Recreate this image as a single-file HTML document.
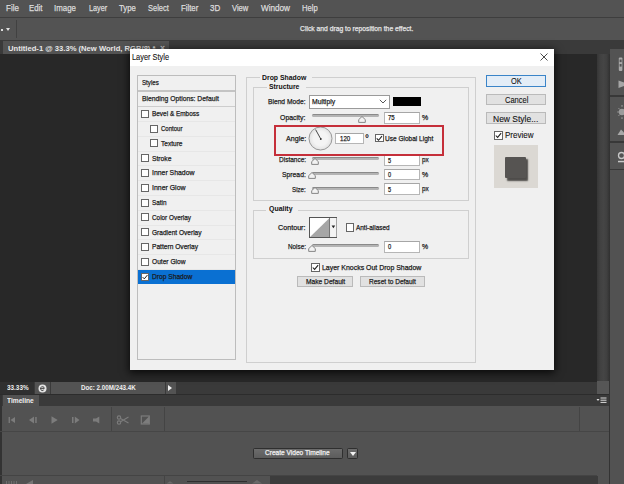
<!DOCTYPE html>
<html>
<head>
<meta charset="utf-8">
<title>Layer Style</title>
<style>
*{box-sizing:border-box;margin:0;padding:0}
html,body{width:624px;height:484px;overflow:hidden;background:#282828;font-family:"Liberation Sans","DejaVu Sans",sans-serif;}
.a{position:absolute}
.t{position:absolute;white-space:nowrap;line-height:1;transform-origin:0 50%;-webkit-text-stroke:0.25px}
.cb{position:absolute;border:1px solid #666;background:#fff}
.grp{position:absolute;border:1px solid #cfcfcf}
.inp{position:absolute;background:#fff;border:1px solid #b6b6b6;border-top-color:#a6a6a6}
.btn{position:absolute;background:#e1e1e1;border:1px solid #bababa}
.sl{position:absolute;height:3px;background:#b4b4b4;border-top:1px solid #8a8a8a;border-radius:1.5px}
.row{position:absolute;left:0;width:97px}
</style>
</head>
<body>
<div class="a" style="left:0px;top:0px;width:624px;height:17px;background:#535353"></div>
<div class="a" style="left:0px;top:17px;width:624px;height:1px;background:#3e3e3e"></div>
<div class="a" style="left:0px;top:18px;width:624px;height:22px;background:#535353"></div>
<div class="a" style="left:0px;top:40px;width:624px;height:14px;background:#3a3a3a"></div>
<div class="a" style="left:0px;top:41px;width:169px;height:13px;background:#535353"></div>
<div class="a" style="left:0px;top:40px;width:2.5px;height:14px;background:#3a3a3a"></div>
<div class="a" style="left:0px;top:54px;width:597px;height:328px;background:#282828"></div>
<div class="a" style="left:597px;top:54px;width:12.7px;height:340px;background:linear-gradient(90deg,#363636 0%,#414141 25%,#454545 50%,#404040 75%,#303030 100%)"></div>
<div class="a" style="left:608px;top:394px;width:1.7px;height:90px;background:#333"></div>
<div class="a" style="left:609.7px;top:40px;width:14.3px;height:444px;background:#525252"></div>
<div class="a" style="left:609.7px;top:40px;width:14.3px;height:9.4px;background:#3a3a3a"></div>
<div class="a" style="left:609.7px;top:49.4px;width:14.3px;height:120px;background:#535353"></div>
<div class="a" style="left:609.7px;top:95px;width:14.3px;height:2px;background:#383838"></div>
<div class="a" style="left:609.7px;top:140.5px;width:14.3px;height:2px;background:#383838"></div>
<div class="a" style="left:609.7px;top:169px;width:14.3px;height:1.2px;background:#383838"></div>
<svg class="a" style="left:611px;top:49px" width="13" height="120" viewBox="0 0 13 120"><rect x="7.8" y="8.5" width="3.6" height="13.5" rx="1" fill="#a9a9a9"/><rect x="8.6" y="10.5" width="2" height="2.6" fill="#555"/><rect x="8.6" y="15" width="2" height="2.6" fill="#555"/><path d="M7.5 31.5 L13 33.5 L13 37 L7.5 39 Z" fill="#a6a6a6"/><circle cx="11" cy="63" r="3.2" fill="#9c9c9c"/><path d="M6.3 63 h1.6 M11 56 v1.8 M11 68.2 v1.8 M7.6 59.2 l1.1 1.1 M7.6 66.8 l1.1 -1.1" stroke="#a8a8a8" stroke-width="0.9"/><path d="M6.5 86 L10 80.5 L13 83.5 L13 86 Z" fill="#a8a8a8"/><circle cx="10.5" cy="106.5" r="3" fill="none" stroke="#c8c8c8" stroke-width="1.3"/><rect x="7" y="111.8" width="6" height="1.5" fill="#c8c8c8"/></svg>
<span class="t" style="left:5.6px;top:3.06px;font-size:9.6px;color:#dddddd;transform:scaleX(0.8339);">File</span>
<span class="t" style="left:29.3px;top:3.06px;font-size:9.6px;color:#dddddd;transform:scaleX(0.8038);">Edit</span>
<span class="t" style="left:54.4px;top:3.06px;font-size:9.6px;color:#dddddd;transform:scaleX(0.8211);">Image</span>
<span class="t" style="left:88.6px;top:3.06px;font-size:9.6px;color:#dddddd;transform:scaleX(0.7583);">Layer</span>
<span class="t" style="left:118.8px;top:3.06px;font-size:9.6px;color:#dddddd;transform:scaleX(0.8072);">Type</span>
<span class="t" style="left:148px;top:3.06px;font-size:9.6px;color:#dddddd;transform:scaleX(0.7798);">Select</span>
<span class="t" style="left:181.2px;top:3.06px;font-size:9.6px;color:#dddddd;transform:scaleX(0.8111);">Filter</span>
<span class="t" style="left:210px;top:3.06px;font-size:9.6px;color:#dddddd;transform:scaleX(0.8316);">3D</span>
<span class="t" style="left:231.7px;top:3.06px;font-size:9.6px;color:#dddddd;transform:scaleX(0.7903);">View</span>
<span class="t" style="left:261px;top:3.06px;font-size:9.6px;color:#dddddd;transform:scaleX(0.8498);">Window</span>
<span class="t" style="left:302px;top:3.06px;font-size:9.6px;color:#dddddd;transform:scaleX(0.7956);">Help</span>
<div class="a" style="left:16px;top:20px;width:1px;height:18px;background:#414141"></div>
<div class="a" style="left:6px;top:28px;width:0;height:0;border-left:2.5px solid transparent;border-right:2.5px solid transparent;border-top:3px solid #e0e0e0"></div>
<div class="a" style="left:1px;top:29px;width:1.5px;height:1.5px;background:#ddd"></div>
<span class="t" style="left:299.7px;top:24.63px;font-size:7.6px;color:#e6e6e6;transform:scaleX(0.8897);">Click and drag to reposition the effect.</span>
<span class="t" style="left:8px;top:45.02px;font-size:8px;color:#e8e8e8;font-weight:bold;-webkit-text-stroke:0;transform:scaleX(0.9529);">Untitled-1 @ 33.3% (New World, RGB/8) *</span>
<span class="t" style="left:160px;top:44.35px;font-size:8.5px;color:#d0d0d0;transform:scaleX(1.0063);">×</span>
<div class="a" style="left:0px;top:382px;width:597px;height:12px;background:#3a3a3a"></div>
<div class="a" style="left:0px;top:382px;width:34px;height:12px;background:#303030"></div>
<div class="a" style="left:34.5px;top:382px;width:15px;height:12px;background:#535353"></div>
<div class="a" style="left:50.5px;top:382px;width:114px;height:12px;background:#535353"></div>
<div class="a" style="left:165.5px;top:382px;width:10px;height:12px;background:#535353"></div>
<div class="a" style="left:597px;top:381px;width:12px;height:13px;background:#565656"></div>
<span class="t" style="left:7.2px;top:383.93px;font-size:7.6px;color:#efefef;font-weight:bold;-webkit-text-stroke:0;transform:scaleX(0.8383);">33.33%</span>
<span class="t" style="left:80.8px;top:383.93px;font-size:7.6px;color:#efefef;font-weight:bold;-webkit-text-stroke:0;transform:scaleX(0.8217);">Doc: 2.00M/243.4K</span>
<svg class="a" style="left:38px;top:383.5px" width="9" height="9" viewBox="0 0 9 9"><circle cx="4.5" cy="4.5" r="4" fill="#e4e4e4"/><path d="M2.6 4.6 h3.6 M6.3 4.5 a1.9 1.9 0 1 0 -0.6 1.5" stroke="#4a4a4a" stroke-width="1" fill="none"/></svg>
<div class="a" style="left:168.3px;top:385px;width:0;height:0;border-top:3px solid transparent;border-bottom:3px solid transparent;border-left:4.5px solid #f0f0f0"></div>
<div class="a" style="left:0px;top:394px;width:609px;height:1px;background:#2c2c2c"></div>
<div class="a" style="left:0px;top:395px;width:609px;height:11px;background:#3a3a3a"></div>
<div class="a" style="left:3px;top:395px;width:36px;height:11px;background:#535353"></div>
<div class="a" style="left:0px;top:406px;width:609px;height:78px;background:#525252"></div>
<div class="a" style="left:0px;top:395px;width:2px;height:89px;background:#333"></div>
<span class="t" style="left:7.2px;top:396.93px;font-size:7.6px;color:#f0f0f0;font-weight:bold;-webkit-text-stroke:0;transform:scaleX(0.8738);">Timeline</span>
<div class="a" style="left:0px;top:431px;width:609px;height:1px;background:#464646"></div>
<div class="a" style="left:111px;top:407px;width:1px;height:24px;background:#444"></div>
<div class="a" style="left:163.5px;top:407px;width:1px;height:24px;background:#444"></div>
<div class="a" style="left:579px;top:407px;width:1px;height:24px;background:#444"></div>
<div class="a" style="left:0px;top:475px;width:597px;height:1px;background:#444"></div>
<div class="a" style="left:270px;top:476px;width:328px;height:8px;background:#3c3c3c"></div>
<div class="a" style="left:163.5px;top:476px;width:1px;height:8px;background:#444"></div>
<div class="a" style="left:187px;top:480.5px;width:60px;height:1.5px;background:#2e2e2e"></div>
<svg class="a" style="left:596px;top:396px" width="11" height="9" viewBox="0 0 11 9"><path d="M0.5 3 h3 l-1.5 2 z" fill="#ddd"/><path d="M4.5 2 h6 M4.5 4.2 h6 M4.5 6.4 h6" stroke="#ddd" stroke-width="1"/></svg>
<svg class="a" style="left:0px;top:412px" width="160" height="16" viewBox="0 0 160 16"><g fill="#7c7c7c"><rect x="8.6" y="5" width="1.3" height="6"/><path d="M15 5 L15 11 L10.5 8 Z"/><path d="M34 4.6 L34 11.4 L29 8 Z"/><rect x="35.2" y="5" width="1.5" height="6"/><path d="M51.5 4.3 L51.5 11.7 L57.7 8 Z"/><rect x="72" y="5" width="1.5" height="6"/><path d="M74.8 4.6 L74.8 11.4 L79.5 8 Z"/><path d="M99.3 4.5 L99.3 11.5 L96 9.5 L93 9.5 L93 6.5 L96 6.5 Z"/></g><g fill="none" stroke="#7c7c7c" stroke-width="1.1"><circle cx="119" cy="5.6" r="1.7"/><circle cx="119" cy="10.6" r="1.7"/><path d="M120.5 6.5 L128.5 11 M120.5 9.7 L128.5 5"/></g><rect x="141.3" y="4" width="8" height="8" fill="none" stroke="#7c7c7c" stroke-width="1.2"/><path d="M149 4.5 L149 11.5 L142 11.5 Z" fill="#7c7c7c"/></svg>
<svg class="a" style="left:5px;top:478px" width="32" height="6" viewBox="0 0 32 6"><path d="M1.5 3 v3 M4 3 v3 M6.5 3 v3 M9 3 v3 M11.5 3 v3" stroke="#6e6e6e" stroke-width="1"/><path d="M21 6 L28 2 L28 6 Z" fill="#757575"/></svg>
<svg class="a" style="left:165px;top:478px" width="100" height="6" viewBox="0 0 100 6"><path d="M1.5 5.5 L5 3.2 L8.5 5.5 Z" fill="#6a6a6a"/><path d="M87 5.5 L92 2 L97 5.5 Z" fill="#6a6a6a"/></svg>
<div class="a" style="left:252.5px;top:447.5px;width:90px;height:11.5px;background:linear-gradient(#6c6c6c,#5c5c5c);border:1px solid #2f2f2f;border-radius:1.5px"></div>
<span class="t" style="left:265.4px;top:449.24px;font-size:7.4px;color:#f2f2f2;transform:scaleX(0.8901);">Create Video Timeline</span>
<div class="a" style="left:347px;top:447.5px;width:11px;height:11.5px;background:linear-gradient(#6c6c6c,#5c5c5c);border:1px solid #2f2f2f;border-radius:1.5px"></div>
<div class="a" style="left:349.5px;top:451.5px;width:0;height:0;border-left:3px solid transparent;border-right:3px solid transparent;border-top:4px solid #f4f4f4"></div>
<div class="a" style="left:130px;top:48.6px;width:424px;height:321.2px;background:#f0f0f0;box-shadow:0 2px 8px 1px rgba(0,0,0,0.75)"><div class="a" style="left:0px;top:0px;width:424px;height:17.4px;background:#fff"></div><span class="t" style="left:2.2px;top:4.48px;font-size:9.2px;color:#111;transform:scaleX(0.8049);-webkit-text-stroke:0.1px;">Layer Style</span><svg class="a" style="left:409.5px;top:4.7px" width="8" height="8" viewBox="0 0 8 8"><path d="M0.5 0.5 L7.5 7.5 M7.5 0.5 L0.5 7.5" stroke="#2a2a2a" stroke-width="0.85"/></svg><div class="a" style="left:7px;top:26.9px;width:99px;height:285px;border:1px solid #bdbdbd;background:#f0f0f0"></div><div class="a" style="left:8px;top:41.4px;width:97px;height:1.6px;background:#c4c4c4"></div><div class="a" style="left:8px;top:57.4px;width:97px;height:1px;background:#cdcdcd"></div><span class="t" style="left:12px;top:30.23px;font-size:7.8px;color:#1a1a1a;transform:scaleX(0.7912);">Styles</span><span class="t" style="left:12px;top:46.43px;font-size:7.8px;color:#1a1a1a;transform:scaleX(0.8686);">Blending Options: Default</span><div class="a" style="left:8px;top:72.4px;width:97px;height:1px;background:#e7e7e7"></div><div class="cb" style="left:11px;top:61.4px;width:8px;height:8px;"></div><span class="t" style="left:22px;top:61.63px;font-size:7.8px;color:#1a1a1a;transform:scaleX(0.8251);">Bevel &amp; Emboss</span><div class="a" style="left:8px;top:87.4px;width:97px;height:1px;background:#e7e7e7"></div><div class="cb" style="left:20px;top:76.4px;width:8px;height:8px;"></div><span class="t" style="left:30.8px;top:76.43px;font-size:7.8px;color:#1a1a1a;transform:scaleX(0.7748);">Contour</span><div class="a" style="left:8px;top:102.4px;width:97px;height:1px;background:#e7e7e7"></div><div class="cb" style="left:20px;top:90.4px;width:8px;height:8px;"></div><span class="t" style="left:30.8px;top:91.23px;font-size:7.8px;color:#1a1a1a;transform:scaleX(0.8406);">Texture</span><div class="a" style="left:8px;top:116.4px;width:97px;height:1px;background:#e7e7e7"></div><div class="cb" style="left:11px;top:105.4px;width:8px;height:8px;"></div><span class="t" style="left:22px;top:106.03px;font-size:7.8px;color:#1a1a1a;transform:scaleX(0.8649);">Stroke</span><div class="a" style="left:8px;top:131.4px;width:97px;height:1px;background:#e7e7e7"></div><div class="cb" style="left:11px;top:120.4px;width:8px;height:8px;"></div><span class="t" style="left:22px;top:120.83px;font-size:7.8px;color:#1a1a1a;transform:scaleX(0.8831);">Inner Shadow</span><div class="a" style="left:8px;top:146.4px;width:97px;height:1px;background:#e7e7e7"></div><div class="cb" style="left:11px;top:135.4px;width:8px;height:8px;"></div><span class="t" style="left:22px;top:135.63px;font-size:7.8px;color:#1a1a1a;transform:scaleX(0.8885);">Inner Glow</span><div class="a" style="left:8px;top:161.4px;width:97px;height:1px;background:#e7e7e7"></div><div class="cb" style="left:11px;top:150.4px;width:8px;height:8px;"></div><span class="t" style="left:22px;top:150.43px;font-size:7.8px;color:#1a1a1a;transform:scaleX(0.8155);">Satin</span><div class="a" style="left:8px;top:176.4px;width:97px;height:1px;background:#e7e7e7"></div><div class="cb" style="left:11px;top:164.4px;width:8px;height:8px;"></div><span class="t" style="left:22px;top:165.23px;font-size:7.8px;color:#1a1a1a;transform:scaleX(0.8181);">Color Overlay</span><div class="a" style="left:8px;top:190.4px;width:97px;height:1px;background:#e7e7e7"></div><div class="cb" style="left:11px;top:179.4px;width:8px;height:8px;"></div><span class="t" style="left:22px;top:180.03px;font-size:7.8px;color:#1a1a1a;transform:scaleX(0.8399);">Gradient Overlay</span><div class="a" style="left:8px;top:205.4px;width:97px;height:1px;background:#e7e7e7"></div><div class="cb" style="left:11px;top:194.4px;width:8px;height:8px;"></div><span class="t" style="left:22px;top:194.83px;font-size:7.8px;color:#1a1a1a;transform:scaleX(0.8491);">Pattern Overlay</span><div class="a" style="left:8px;top:220.4px;width:97px;height:1px;background:#e7e7e7"></div><div class="cb" style="left:11px;top:209.4px;width:8px;height:8px;"></div><span class="t" style="left:22px;top:209.63px;font-size:7.8px;color:#1a1a1a;transform:scaleX(0.8494);">Outer Glow</span><div class="a" style="left:8px;top:221.4px;width:97px;height:14.5px;background:#0a70d2"></div><div class="cb" style="left:11px;top:224.4px;width:8px;height:8px;"></div><svg class="a" style="left:11px;top:224.4px" width="8" height="8" viewBox="0 0 9 9"><path d="M1.8 4.6 L3.7 6.6 L7.3 2.2" fill="none" stroke="#222" stroke-width="1.1"/></svg><span class="t" style="left:22px;top:224.43px;font-size:7.8px;color:#1a1a1a;transform:scaleX(0.8529);">Drop Shadow</span><div class="grp" style="left:116px;top:28.4px;width:229.5px;height:285.8px;"></div><div class="a" style="left:130px;top:27.4px;width:52px;height:4px;background:#f0f0f0"></div><span class="t" style="left:132px;top:25.07px;font-size:7.9px;color:#111;font-weight:bold;-webkit-text-stroke:0;transform:scaleX(0.8710);">Drop Shadow</span><div class="grp" style="left:123px;top:38.4px;width:216px;height:114px;"></div><div class="a" style="left:137px;top:36.4px;width:38.5px;height:4px;background:#f0f0f0"></div><span class="t" style="left:139.2px;top:34.17px;font-size:7.9px;color:#111;font-weight:bold;-webkit-text-stroke:0;transform:scaleX(0.8666);">Structure</span><div class="grp" style="left:123px;top:161.4px;width:216px;height:49.5px;"></div><div class="a" style="left:136px;top:159.4px;width:31.5px;height:4px;background:#f0f0f0"></div><span class="t" style="left:138.5px;top:156.57px;font-size:7.9px;color:#111;font-weight:bold;-webkit-text-stroke:0;transform:scaleX(0.8785);">Quality</span><span class="t" style="left:137.9px;top:48.93px;font-size:7.8px;color:#1a1a1a;transform:scaleX(0.8565);">Blend Mode:</span><div class="a" style="left:178.8px;top:46px;width:81.4px;height:14.2px;background:#fff;border:1px solid #9a9a9a"></div><span class="t" style="left:181.5px;top:48.93px;font-size:7.8px;color:#1a1a1a;transform:scaleX(0.8738);">Multiply</span><svg class="a" style="left:249px;top:50.9px" width="8" height="5" viewBox="0 0 8 5"><path d="M0.8 0.8 L4 4 L7.2 0.8" fill="none" stroke="#444" stroke-width="0.9"/></svg><div class="a" style="left:263px;top:48px;width:28.3px;height:9.6px;background:#000"></div><span class="t" style="left:150px;top:65.23px;font-size:7.8px;color:#1a1a1a;transform:scaleX(0.8878);">Opacity:</span><div class="sl" style="left:181.5px;top:65.4px;width:67px;height:3px;"></div><svg class="a" style="left:228px;top:67.4px" width="8" height="7" viewBox="0 0 8 7"><path d="M4 0.5 L7.3 3.6 L7.3 6.4 L0.7 6.4 L0.7 3.6 Z" fill="#f2f2f2" stroke="#7a7a7a" stroke-width="0.9"/></svg><div class="inp" style="left:254px;top:63.6px;width:35.8px;height:11.4px;"></div><span class="t" style="left:257.9px;top:65.33px;font-size:7.6px;color:#1a1a1a;transform:scaleX(0.7926);">75</span><span class="t" style="left:291.5px;top:65.33px;font-size:7.6px;color:#1a1a1a;transform:scaleX(0.9164);">%</span><span class="t" style="left:148.7px;top:106.93px;font-size:7.8px;color:#1a1a1a;transform:scaleX(0.8334);">Distance:</span><div class="sl" style="left:181.5px;top:108.5px;width:67px;height:3px;"></div><svg class="a" style="left:181.3px;top:109.1px" width="8" height="7" viewBox="0 0 8 7"><path d="M4 0.5 L7.3 3.6 L7.3 6.4 L0.7 6.4 L0.7 3.6 Z" fill="#f2f2f2" stroke="#7a7a7a" stroke-width="0.9"/></svg><span class="t" style="left:152px;top:122.53px;font-size:7.8px;color:#1a1a1a;transform:scaleX(0.8714);">Spread:</span><div class="sl" style="left:181.5px;top:123.3px;width:67px;height:3px;"></div><svg class="a" style="left:177.9px;top:123.9px" width="8" height="7" viewBox="0 0 8 7"><path d="M4 0.5 L7.3 3.6 L7.3 6.4 L0.7 6.4 L0.7 3.6 Z" fill="#f2f2f2" stroke="#7a7a7a" stroke-width="0.9"/></svg><span class="t" style="left:162px;top:137.53px;font-size:7.8px;color:#1a1a1a;transform:scaleX(0.7957);">Size:</span><div class="sl" style="left:181.5px;top:138.2px;width:67px;height:3px;"></div><svg class="a" style="left:181.3px;top:138.8px" width="8" height="7" viewBox="0 0 8 7"><path d="M4 0.5 L7.3 3.6 L7.3 6.4 L0.7 6.4 L0.7 3.6 Z" fill="#f2f2f2" stroke="#7a7a7a" stroke-width="0.9"/></svg><div class="inp" style="left:254px;top:105.6px;width:35.8px;height:11.5px;"></div><span class="t" style="left:257.9px;top:108.03px;font-size:7.6px;color:#1a1a1a;transform:scaleX(0.7321);">5</span><span class="t" style="left:291.5px;top:107.53px;font-size:7.6px;color:#1a1a1a;transform:scaleX(0.8467);">px</span><div class="inp" style="left:254px;top:120.2px;width:35.8px;height:11.5px;"></div><span class="t" style="left:257.9px;top:122.63px;font-size:7.6px;color:#1a1a1a;transform:scaleX(0.7321);">0</span><span class="t" style="left:291.5px;top:122.03px;font-size:7.6px;color:#1a1a1a;transform:scaleX(0.9164);">%</span><div class="inp" style="left:254px;top:134.9px;width:35.8px;height:11.5px;"></div><span class="t" style="left:257.9px;top:137.33px;font-size:7.6px;color:#1a1a1a;transform:scaleX(0.7321);">5</span><span class="t" style="left:291.5px;top:136.83px;font-size:7.6px;color:#1a1a1a;transform:scaleX(0.8467);">px</span><span class="t" style="left:156px;top:85.93px;font-size:7.8px;color:#1a1a1a;transform:scaleX(0.9136);">Angle:</span><svg class="a" style="left:178px;top:77.4px" width="25" height="25" viewBox="0 0 25 25"><defs><radialGradient id="dg" cx="50%" cy="50%" r="50%"><stop offset="0.6" stop-color="#f4f4f4"/><stop offset="1" stop-color="#e2e2e2"/></radialGradient></defs><circle cx="12.5" cy="12.5" r="11.5" fill="url(#dg)" stroke="#8f8f8f" stroke-width="0.9"/><path d="M12.5 12.5 L7.6 3.6" stroke="#333" stroke-width="0.9"/><circle cx="12.8" cy="13" r="0.9" fill="#222"/></svg><div class="inp" style="left:205px;top:84.2px;width:29px;height:11.6px;"></div><span class="t" style="left:209.8px;top:86.13px;font-size:7.6px;color:#1a1a1a;transform:scaleX(0.8049);">120</span><span class="t" style="left:235.3px;top:84.82px;font-size:11px;color:#1a1a1a;transform:scaleX(0.9078);">°</span><div class="cb" style="left:245px;top:85.2px;width:8.6px;height:8.6px;"></div><svg class="a" style="left:245px;top:85.2px" width="8.6" height="8.6" viewBox="0 0 9 9"><path d="M1.8 4.6 L3.7 6.6 L7.3 2.2" fill="none" stroke="#222" stroke-width="1.1"/></svg><span class="t" style="left:255.4px;top:85.93px;font-size:7.8px;color:#1a1a1a;transform:scaleX(0.8377);">Use Global Light</span><div class="a" style="left:143.5px;top:76.1px;width:170.9px;height:31.3px;border:2.2px solid #c52f3a"></div><span class="t" style="left:147.9px;top:174.93px;font-size:7.8px;color:#1a1a1a;transform:scaleX(0.9195);">Contour:</span><svg class="a" style="left:178.8px;top:168.4px" width="28" height="21" viewBox="0 0 28 21"><rect x="0.5" y="0.5" width="27" height="20" fill="#fff" stroke="#555" stroke-width="1"/><path d="M1 20 L20.5 1 L20.5 20 Z" fill="#a6a6a6"/><path d="M20.7 0.5 V20.5" stroke="#555" stroke-width="0.9"/><rect x="21.2" y="1" width="6.3" height="19" fill="#f4f4f4"/><path d="M22.6 8.6 h3.6 l-1.8 2.6 z" fill="#222"/></svg><div class="cb" style="left:215.6px;top:174.6px;width:8.8px;height:8.8px;"></div><span class="t" style="left:226.2px;top:175.43px;font-size:7.8px;color:#1a1a1a;transform:scaleX(0.8245);">Anti-aliased</span><span class="t" style="left:157.5px;top:194.23px;font-size:7.8px;color:#1a1a1a;transform:scaleX(0.8096);">Noise:</span><div class="sl" style="left:181.5px;top:195.8px;width:67px;height:3px;"></div><svg class="a" style="left:177.9px;top:196.4px" width="8" height="7" viewBox="0 0 8 7"><path d="M4 0.5 L7.3 3.6 L7.3 6.4 L0.7 6.4 L0.7 3.6 Z" fill="#f2f2f2" stroke="#7a7a7a" stroke-width="0.9"/></svg><div class="inp" style="left:253.5px;top:192.8px;width:36.6px;height:11.5px;"></div><span class="t" style="left:257.8px;top:194.63px;font-size:7.6px;color:#1a1a1a;transform:scaleX(0.7557);">0</span><span class="t" style="left:291.9px;top:194.63px;font-size:7.6px;color:#1a1a1a;transform:scaleX(0.9016);">%</span><div class="cb" style="left:181.3px;top:214.7px;width:8.8px;height:8.8px;"></div><svg class="a" style="left:181.3px;top:214.7px" width="8.8" height="8.8" viewBox="0 0 9 9"><path d="M1.8 4.6 L3.7 6.6 L7.3 2.2" fill="none" stroke="#222" stroke-width="1.1"/></svg><span class="t" style="left:191.7px;top:215.43px;font-size:7.8px;color:#1a1a1a;transform:scaleX(0.8915);">Layer Knocks Out Drop Shadow</span><div class="btn" style="left:167px;top:227.4px;width:56px;height:11.5px;"></div><span class="t" style="left:175.6px;top:229.23px;font-size:7.8px;color:#1a1a1a;transform:scaleX(0.8533);">Make Default</span><div class="btn" style="left:230px;top:227.4px;width:64.5px;height:11.5px;"></div><span class="t" style="left:238.6px;top:229.23px;font-size:7.8px;color:#1a1a1a;transform:scaleX(0.8387);">Reset to Default</span><div class="a" style="left:356px;top:26.4px;width:60px;height:12px;background:#e3edf7;border:1.5px solid #3a84c8"></div><span class="t" style="left:380.8px;top:27.57px;font-size:9.4px;color:#111;transform:scaleX(0.7899);-webkit-text-stroke:0.1px;">OK</span><div class="btn" style="left:356px;top:45.4px;width:60px;height:11.5px;"></div><span class="t" style="left:374.6px;top:46.07px;font-size:9.4px;color:#111;transform:scaleX(0.8017);-webkit-text-stroke:0.1px;">Cancel</span><div class="btn" style="left:356px;top:63.9px;width:60px;height:11.5px;"></div><span class="t" style="left:363px;top:64.97px;font-size:9.4px;color:#111;transform:scaleX(0.9057);-webkit-text-stroke:0.1px;">New Style...</span><div class="cb" style="left:364.3px;top:82.6px;width:8.8px;height:8.8px;"></div><svg class="a" style="left:364.3px;top:82.6px" width="8.8" height="8.8" viewBox="0 0 9 9"><path d="M1.8 4.6 L3.7 6.6 L7.3 2.2" fill="none" stroke="#222" stroke-width="1.1"/></svg><span class="t" style="left:375.2px;top:81.57px;font-size:9.4px;color:#111;transform:scaleX(0.8577);-webkit-text-stroke:0.1px;">Preview</span><div class="a" style="left:364px;top:96.4px;width:44px;height:42.8px;background:#dbd8d3"></div><div class="a" style="left:375.2px;top:108.4px;width:21px;height:20.6px;background:#565452;border-radius:1px;box-shadow:2px 2.6px 1.6px rgba(66,64,62,0.92)"></div></div>
</body>
</html>
